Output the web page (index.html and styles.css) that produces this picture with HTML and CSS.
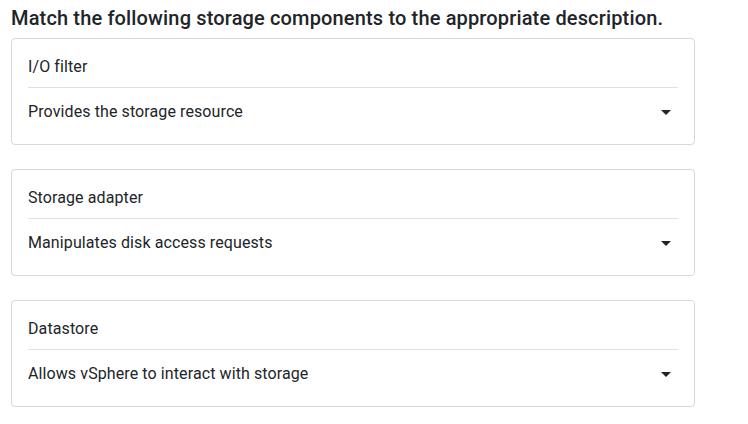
FILE: index.html
```html
<!DOCTYPE html>
<html lang="en">
<head>
<meta charset="utf-8">
<title>Match storage components</title>
<link rel="stylesheet" href="styles.css">
</head>
<body>
<div class="page">
  <h1 class="title">Match the following storage components to the appropriate description.</h1>
  <div class="card">
    <div class="term">I/O filter</div>
    <div class="answer">
      <span class="answer-text">Provides the storage resource</span>
      <span class="caret"></span>
    </div>
  </div>
  <div class="card">
    <div class="term">Storage adapter</div>
    <div class="answer">
      <span class="answer-text">Manipulates disk access requests</span>
      <span class="caret"></span>
    </div>
  </div>
  <div class="card">
    <div class="term">Datastore</div>
    <div class="answer">
      <span class="answer-text">Allows vSphere to interact with storage</span>
      <span class="caret"></span>
    </div>
  </div>
</div>
</body>
</html>
```
FILE: styles.css
```css
html, body {
  margin: 0;
  padding: 0;
  background: #ffffff;
}
body {
  font-family: Roboto, "Liberation Sans", Arial, sans-serif;
  color: #212529;
}
.page {
  padding: 6px 11px 0 11px;
  display: flex;
  flex-direction: column;
  gap: 24px;
  width: 684px;
}
.title {
  font-size: 20px;
  font-weight: 500;
  line-height: 24px;
  letter-spacing: 0.15px;
  margin: 0 0 -16px 0;
  white-space: nowrap;
}
.card {
  border: 1px solid #d3d9de;
  border-radius: 4px;
  padding: 0 16px;
  display: flex;
  flex-direction: column;
}
.term {
  font-size: 16px;
  line-height: 24px;
  letter-spacing: 0.1px;
  padding: 16px 0 8px 0;
  border-bottom: 1px solid #dee2e6;
}
.answer {
  font-size: 16px;
  line-height: 24px;
  letter-spacing: 0.1px;
  padding: 12px 7px 20px 0;
  display: flex;
  align-items: center;
  justify-content: space-between;
}
.caret {
  width: 0;
  height: 0;
  border-left: 5px solid transparent;
  border-right: 5px solid transparent;
  border-top: 5px solid #212529;
  margin-top: 1px;
}
```
